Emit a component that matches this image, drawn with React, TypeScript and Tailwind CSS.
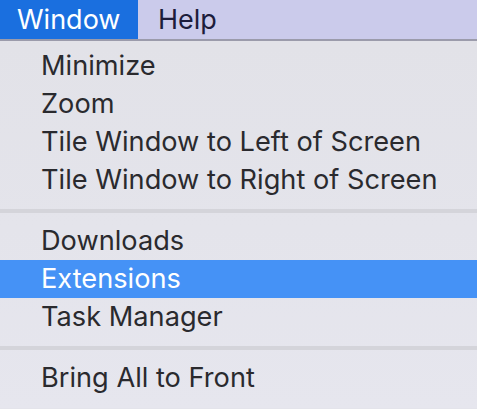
import React from "react";

const Item = ({ label, active = false }: { label: string; active?: boolean }) => (
  <div
    className={`h-[38px] flex items-center pl-[41px] text-[27.2px] leading-none ${
      active ? "bg-[#4592f6] text-white" : "text-[#2a2a2e]"
    }`}
  >
    {label}
  </div>
);

const Sep = () => (
  <div className="h-[23px] flex items-center">
    <div className="h-[4px] w-full bg-[#d4d4da]" />
  </div>
);

export default function App() {
  return (
    <div
      className="w-[477px] h-[409px] overflow-hidden bg-[#e4e4eb]"
      style={{ fontFamily: "Inter, 'Noto Sans', sans-serif" }}
    >
      <div className="h-[39px] flex bg-[#cbcbeb] text-[27px] leading-none">
        <div className="w-[138px] bg-[#1a6fdf] text-white flex items-center pl-[17px]">Window</div>
        <div className="flex items-center pl-[20px] text-[#1d1d3b]">Help</div>
      </div>
      <div className="h-[2px] bg-[#9b9bab]" />
      <div className="pt-[6px] bg-gradient-to-b from-[#e2e2e8] to-[#e6e6ee]">
        <Item label="Minimize" />
        <Item label="Zoom" />
        <Item label="Tile Window to Left of Screen" />
        <Item label="Tile Window to Right of Screen" />
        <Sep />
        <Item label="Downloads" />
        <Item label="Extensions" active />
        <Item label="Task Manager" />
        <Sep />
        <Item label="Bring All to Front" />
        <div className="h-[11px]" />
      </div>
    </div>
  );
}
